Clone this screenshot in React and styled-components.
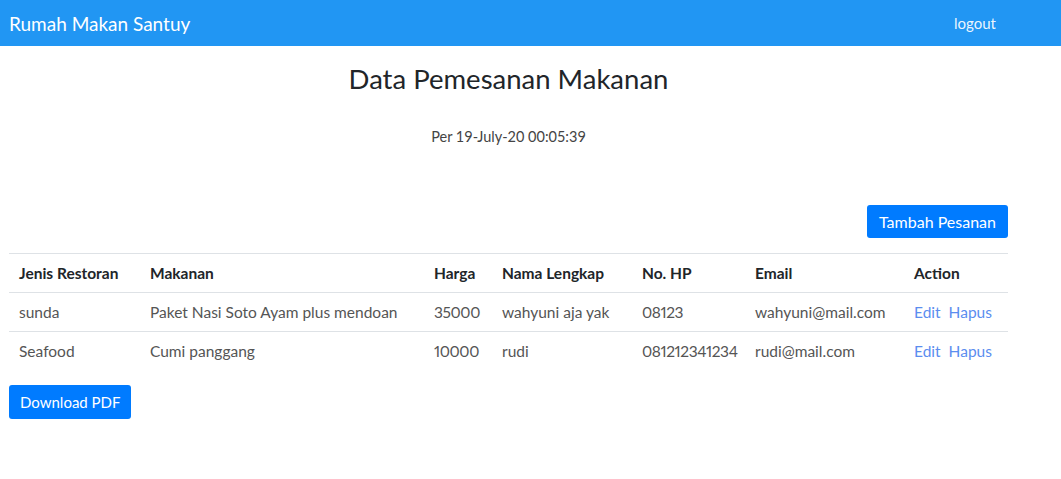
import React from "react";
import styled, { createGlobalStyle } from "styled-components";

const Global = createGlobalStyle`
  * { box-sizing: border-box; }
  html, body { margin: 0; padding: 0; background: #fff; }
  body { font-family: Lato, "Open Sans", sans-serif; color: #212529; font-size: 15px; }
`;

const Navbar = styled.nav`
  height: 46px;
  background: #2196f3;
  display: flex;
  align-items: center;
  justify-content: space-between;
  padding: 0 65px 0 9px;
`;

const Brand = styled.span`
  color: #fff;
  font-size: 19px;
`;

const NavLink = styled.a`
  color: rgba(255, 255, 255, 0.92);
  font-size: 15px;
  text-decoration: none;
`;

const Container = styled.main`
  width: 999px;
  margin-left: 9px;
  display: flex;
  flex-direction: column;
`;

const Title = styled.h1`
  margin: 17px 0 0;
  font-size: 27.5px;
  font-weight: 400;
  text-align: center;
  line-height: 32px;
  color: #212529;
`;

const Subtitle = styled.p`
  margin: 33px 0 0;
  font-size: 14.5px;
  text-align: center;
  color: #444;
`;

const Toolbar = styled.div`
  display: flex;
  justify-content: ${(p) => p.$align || "flex-end"};
  margin-top: ${(p) => p.$mt || 0}px;
`;

const Button = styled.button`
  background: #007bff;
  color: #fff;
  border: none;
  border-radius: 3px;
  font-family: inherit;
  font-size: ${(p) => p.$fs || 15}px;
  height: ${(p) => p.$h || 33}px;
  padding: 0 ${(p) => p.$px || 11}px;
  cursor: pointer;
`;

const Table = styled.table`
  width: 100%;
  table-layout: fixed;
  border-collapse: collapse;
  margin-top: 15px;
`;

const Th = styled.th`
  text-align: left;
  font-weight: 700;
  font-size: 15.5px;
  color: #212529;
  padding: 0 10px;
  height: 39px;
  white-space: nowrap;
  border-top: 1px solid #dee2e6;
  border-bottom: 1px solid #dee2e6;
  width: ${(p) => p.$w}px;
`;

const Td = styled.td`
  padding: 0 10px;
  height: 39px;
  font-size: 15.5px;
  color: #555;
  white-space: nowrap;
  font-variant-numeric: proportional-nums;
  letter-spacing: ${(p) => (p.$num ? "-0.4px" : "normal")};
  border-bottom: ${(p) => (p.$last ? "none" : "1px solid #dee2e6")};
`;

const ActionLink = styled.a`
  color: #5b8def;
  text-decoration: none;
  margin-right: 8px;
`;

const cols = [
  ["Jenis Restoran", 131],
  ["Makanan", 284],
  ["Harga", 68],
  ["Nama Lengkap", 140],
  ["No. HP", 113],
  ["Email", 159],
  ["Action", 104],
];

const rows = [
  ["sunda", "Paket Nasi Soto Ayam plus mendoan", "35000", "wahyuni aja yak", "08123", "wahyuni@mail.com"],
  ["Seafood", "Cumi panggang", "10000", "rudi", "081212341234", "rudi@mail.com"],
];

export default function App() {
  return (
    <>
      <Global />
      <Navbar>
        <Brand>Rumah Makan Santuy</Brand>
        <NavLink href="#">logout</NavLink>
      </Navbar>
      <Container>
        <Title>Data Pemesanan Makanan</Title>
        <Subtitle>Per 19-July-20 00:05:39</Subtitle>
        <Toolbar $mt={60}>
          <Button $fs={16} $px={12}>Tambah Pesanan</Button>
        </Toolbar>
        <Table>
          <thead>
            <tr>
              {cols.map(([c, w]) => (
                <Th key={c} $w={w}>{c}</Th>
              ))}
            </tr>
          </thead>
          <tbody>
            {rows.map((r, i) => (
              <tr key={i}>
                {r.map((v, j) => (
                  <Td key={j} $num={j === 2 || j === 4} $last={i === rows.length - 1}>{v}</Td>
                ))}
                <Td $last={i === rows.length - 1}>
                  <ActionLink href="#">Edit</ActionLink>
                  <ActionLink href="#">Hapus</ActionLink>
                </Td>
              </tr>
            ))}
          </tbody>
        </Table>
        <Toolbar $align="flex-start" $mt={14}>
          <Button $h={34}>Download PDF</Button>
        </Toolbar>
      </Container>
    </>
  );
}
